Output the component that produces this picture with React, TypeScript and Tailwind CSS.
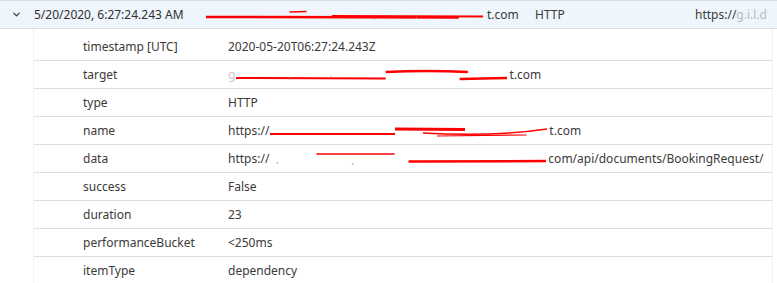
import { FiChevronDown } from 'react-icons/fi';

// red marker scribble used to hide parts of the urls
function Scribble({ width, variant = 0 }: { width: number; variant?: number }) {
  const w = width;
  return (
    <svg width={w} height={14} viewBox={`0 0 ${w} 14`} className="inline-block align-middle shrink-0">
      {variant === 0 && (
        <>
          <path d={`M1 9 L${w * 0.9} 9.5`} stroke="#ff0000" strokeWidth="2.5" fill="none" />
          <path d={`M${w * 0.45} 8 L${w - 4} 8.5`} stroke="#ff0000" strokeWidth="2" fill="none" />
          <path d={`M${w * 0.3} 4 L${w * 0.36} 3.5`} stroke="#ff0000" strokeWidth="1.5" fill="none" />
          <circle cx={w * 0.6} cy={11} r="0.8" fill="#999" />
          <circle cx={w * 0.75} cy={10} r="0.8" fill="#999" />
        </>
      )}
      {variant === 1 && (
        <>
          <path d={`M1 10 L${w * 0.55} 10.5`} stroke="#ff0000" strokeWidth="2" fill="none" />
          <path d={`M${w * 0.55} 4 Q${w * 0.7} 2 ${w * 0.85} 4`} stroke="#ff0000" strokeWidth="2.5" fill="none" />
          <path d={`M${w * 0.82} 11 L${w - 2} 10`} stroke="#ff0000" strokeWidth="2.5" fill="none" />
          <circle cx={w * 0.2} cy={11} r="0.8" fill="#999" />
          <circle cx={w * 0.35} cy={9} r="0.8" fill="#999" />
        </>
      )}
      {variant === 2 && (
        <>
          <path d={`M1 10 L${w * 0.45} 10`} stroke="#ff0000" strokeWidth="2" fill="none" />
          <path d={`M${w * 0.45} 5 L${w * 0.7} 5.5`} stroke="#ff0000" strokeWidth="3" fill="none" />
          <path d={`M${w * 0.55} 9 Q${w * 0.8} 13 ${w - 2} 5`} stroke="#ff0000" strokeWidth="1.5" fill="none" />
          <path d={`M${w * 0.6} 12 L${w * 0.92} 11`} stroke="#ff0000" strokeWidth="1.2" fill="none" />
        </>
      )}
      {variant === 3 && (
        <>
          <path d={`M${w * 0.17} 2 L${w * 0.45} 2`} stroke="#ff0000" strokeWidth="1.5" fill="none" />
          <path d={`M${w * 0.5} 9.5 L${w - 2} 9`} stroke="#ff0000" strokeWidth="2.5" fill="none" />
          <circle cx={w * 0.03} cy={11} r="0.8" fill="#999" />
          <circle cx={w * 0.3} cy={12} r="0.8" fill="#999" />
        </>
      )}
    </svg>
  );
}

const rows: { label: string; value: React.ReactNode }[] = [
  { label: 'timestamp [UTC]', value: '2020-05-20T06:27:24.243Z' },
  {
    label: 'target',
    value: (
      <>
        <span className="text-[#c8c8c8]">g</span>
        <Scribble width={274} variant={1} />
        <span>t.com</span>
      </>
    ),
  },
  { label: 'type', value: 'HTTP' },
  {
    label: 'name',
    value: (
      <>
        <span>https://</span>
        <Scribble width={280} variant={2} />
        <span>t.com</span>
      </>
    ),
  },
  {
    label: 'data',
    value: (
      <>
        <span>https://</span>
        <Scribble width={279} variant={3} />
        <span>com/api/documents/BookingRequest/</span>
      </>
    ),
  },
  { label: 'success', value: 'False' },
  { label: 'duration', value: '23' },
  { label: 'performanceBucket', value: '<250ms' },
  { label: 'itemType', value: 'dependency' },
];

export default function App() {
  return (
    <div className="w-[777px] h-[283px] overflow-hidden bg-white text-[12px] text-[#3b3a39] font-['Noto_Sans',sans-serif]">
      <div className="flex items-center h-[29px] border-t border-b border-[#dcdcdc] bg-[#eef5fc] whitespace-nowrap">
        <FiChevronDown className="ml-[11px] w-[11px] h-[11px] text-[#333] stroke-[2.5]" />
        <span className="ml-[12px] w-[171px] shrink-0 text-[#323130]">5/20/2020, 6:27:24.243 AM</span>
        <span className="flex items-center w-[330px] shrink-0">
          <Scribble width={282} variant={0} />
          <span>t.com</span>
        </span>
        <span className="w-[160px] shrink-0">HTTP</span>
        <span className="shrink-0">https://</span>
        <span className="shrink-0 text-[#bbb]">g.i.l.d</span>
      </div>
      <div className="ml-[33px] w-[740px] border-l border-r border-[#f2f2f2]">
        {rows.map((row, i) => (
          <div
            key={row.label}
            className={`flex items-center border-b border-[#dedede] whitespace-nowrap ${
              i === 0 ? 'h-[32px] pt-[4px]' : 'h-[28px]'
            }`}
          >
            <span className="pl-[49px] w-[194px] shrink-0">{row.label}</span>
            <span className="flex items-center">{row.value}</span>
          </div>
        ))}
      </div>
    </div>
  );
}
